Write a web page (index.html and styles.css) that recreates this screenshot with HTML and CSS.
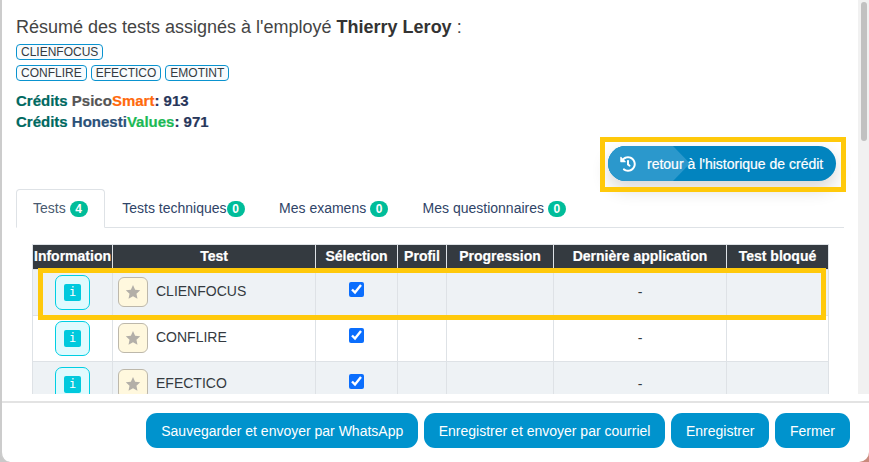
FILE: index.html
```html
<!DOCTYPE html>
<html lang="fr">
<head>
    <meta charset="UTF-8">
    <title>Résumé des tests</title>
    <link rel="stylesheet" href="styles.css">
</head>
<body>
    <div class="modal">
        <div class="modal-main">
            <div class="modal-body">
                <h5 class="summary">Résumé des tests assignés à l'employé <strong>Thierry Leroy</strong> :</h5>
                <div class="assigned">
                    <div class="assigned-row"><span class="test-tag">CLIENFOCUS</span></div>
                    <div class="assigned-row">
                        <span class="test-tag">CONFLIRE</span>
                        <span class="test-tag">EFECTICO</span>
                        <span class="test-tag">EMOTINT</span>
                    </div>
                </div>
                <p class="credits"><span class="teal">Crédits</span> <span class="grey">Psico</span><span class="orange">Smart</span>: 913</p>
                <p class="credits"><span class="teal">Crédits</span> <span class="blue">Honesti</span><span class="green">Values</span>: 971</p>

                <div class="back-row">
                    <button class="back-btn">
                        <svg class="back-icon" viewBox="0 0 512 512"><path d="M504 255.531c.253 136.64-111.18 248.372-247.82 248.468-59.015.042-113.223-20.53-155.822-54.911-11.077-8.94-11.905-25.541-1.839-35.607l11.267-11.267c8.609-8.609 22.353-9.551 31.891-1.984C173.062 425.135 212.781 440 256 440c101.705 0 184-82.311 184-184 0-101.705-82.311-184-184-184-48.814 0-93.149 18.969-126.068 49.932l50.754 50.754c10.08 10.08 2.941 27.314-11.313 27.314H24c-8.837 0-16-7.163-16-16V38.627c0-14.254 17.234-21.393 27.314-11.314l49.372 49.372C129.209 34.136 189.552 8 256 8c136.81 0 247.747 110.78 248 247.531zm-180.912 78.784l9.823-12.63c8.138-10.463 6.253-25.542-4.21-33.679L288 256.349V152c0-13.255-10.745-24-24-24h-16c-13.255 0-24 10.745-24 24v135.651l65.409 50.874c10.463 8.137 25.541 6.253 33.679-4.21z"/></svg>
                        <span class="back-label">retour à l'historique de crédit</span>
                    </button>
                    <div class="highlight highlight-btn"></div>
                </div>

                <ul class="tabs">
                    <li class="tab active">Tests <span class="count">4</span></li>
                    <li class="tab">Tests techniques<span class="count">0</span></li>
                    <li class="tab">Mes examens <span class="count">0</span></li>
                    <li class="tab">Mes questionnaires <span class="count">0</span></li>
                </ul>

                <div class="tab-pane">
                    <table class="tests-table">
                        <colgroup>
                            <col class="col-info"><col class="col-test"><col class="col-sel"><col class="col-profil"><col class="col-prog"><col class="col-date"><col class="col-lock">
                        </colgroup>
                        <thead>
                            <tr>
                                <th>Information</th>
                                <th>Test</th>
                                <th>Sélection</th>
                                <th>Profil</th>
                                <th>Progression</th>
                                <th>Dernière application</th>
                                <th>Test bloqué</th>
                            </tr>
                        </thead>
                        <tbody id="testRows"></tbody>
                    </table>
                    <div class="highlight highlight-row"></div>
                </div>
            </div>
            <div class="scrollbar"><div class="scrollbar-thumb"></div></div>
        </div>
        <div class="modal-footer">
            <button class="footer-btn">Sauvegarder et envoyer par WhatsApp</button>
            <button class="footer-btn">Enregistrer et envoyer par courriel</button>
            <button class="footer-btn">Enregistrer</button>
            <button class="footer-btn">Fermer</button>
        </div>
    </div>
    <script>
        const tests = ["CLIENFOCUS", "CONFLIRE", "EFECTICO"];
        const rows = document.getElementById("testRows");

        tests.forEach(name => {
            const row = document.createElement("tr");
            row.innerHTML = `
                <td class="center"><span class="info-btn"><span class="info-square">i</span></span></td>
                <td>
                    <div class="test-cell">
                        <span class="star-btn"><svg viewBox="0 0 24 24"><path d="M12 1.5l3.2 7 7.6.9-5.6 5.2 1.5 7.6L12 18.4l-6.7 3.8 1.5-7.6L1.2 9.4l7.6-.9z"/></svg></span>
                        <span class="test-name">${name}</span>
                    </div>
                </td>
                <td class="center top"><input type="checkbox" checked></td>
                <td></td>
                <td></td>
                <td class="center last-date">-</td>
                <td></td>
            `;
            rows.appendChild(row);
        });
    </script>
</body>
</html>
```

FILE: styles.css
```css
html {
    background: linear-gradient(to right, #c9c9c9 50%, #c98a7c 50%);
}
body {
    margin: 0;
    font-family: "Liberation Sans", Arial, sans-serif;
    color: #343a40;
}
.modal {
    width: 869px;
    height: 462px;
    box-sizing: border-box;
    display: flex;
    flex-direction: column;
    background-color: #fff;
    border-left: 2px solid #ccc;
    border-radius: 0 0 10px 10px;
    overflow: hidden;
}
.modal-main {
    display: flex;
    height: 394px;
    flex-shrink: 0;
}
.modal-body {
    flex: 1;
    min-width: 0;
    padding: 16px 14px 0 14px;
    overflow: hidden;
}
.scrollbar {
    width: 11px;
    flex-shrink: 0;
    background-color: #f1f1f1;
    padding: 2px 2px 0 3px;
    box-sizing: border-box;
}
.scrollbar-thumb {
    height: 139px;
    background-color: #c1c1c1;
    border-radius: 3px;
}
.summary {
    margin: 0;
    font-size: 18px;
    font-weight: normal;
    line-height: 22px;
    color: #444;
}
.summary strong {
    color: #333;
}
.assigned {
    margin-top: 6px;
}
.assigned-row {
    display: flex;
    gap: 4px;
    margin-bottom: 5px;
}
.test-tag {
    height: 16px;
    line-height: 15px;
    box-sizing: border-box;
    padding: 0 4px;
    font-size: 12px;
    border: 1px solid #0a93cf;
    border-radius: 4px;
    background-color: #f8fbfd;
}
.credits {
    margin: 0;
    height: 21px;
    line-height: 21px;
    font-size: 15px;
    font-weight: bold;
    color: #27365a;
    -webkit-text-stroke: 0.2px;
}
.credits:first-of-type {
    margin-top: 9px;
}
.teal { color: #00695f; }
.grey { color: #555; }
.orange { color: #ff6a0d; }
.blue { color: #2b5178; }
.green { color: #1cb955; }

.back-row {
    position: relative;
    display: flex;
    justify-content: flex-end;
    margin-top: 14px;
    padding-right: 8px;
}
.back-btn {
    position: relative;
    display: flex;
    align-items: center;
    width: 228px;
    height: 35px;
    padding: 0 0 0 12px;
    border: none;
    border-radius: 18px;
    overflow: hidden;
    background-color: #0284bf;
    box-shadow: 0 8px 18px rgba(0, 0, 0, 0.16);
    color: #fff;
    font-family: inherit;
    font-size: 14px;
    -webkit-text-stroke: 0.2px;
}
.back-btn::before {
    content: "";
    position: absolute;
    left: 0;
    top: 0;
    width: 82px;
    height: 35px;
    background-color: #2b98cc;
    clip-path: polygon(0 0, 65px 0, 82px 50%, 65px 100%, 0 100%);
}
.back-icon {
    position: relative;
    width: 16px;
    height: 16px;
    fill: #fff;
}
.back-label {
    position: relative;
    margin-left: 11px;
    white-space: nowrap;
}
.highlight {
    position: absolute;
    box-sizing: border-box;
    border: 5px solid #ffc90b;
    pointer-events: none;
}
.highlight-btn {
    left: 584px;
    top: -9px;
    width: 246px;
    height: 55px;
}

.tabs {
    display: flex;
    list-style: none;
    margin: 8px 0 0 0;
    padding: 0;
    border-bottom: 1px solid #dee2e6;
    height: 38px;
}
.tab {
    height: 39px;
    box-sizing: border-box;
    padding: 0 17.25px;
    line-height: 39px;
    font-size: 14px;
    color: #2f4468;
    white-space: nowrap;
}
.tab.active {
    padding: 0 16px 0 16px;
    width: 89px;
    line-height: 37px;
    border: 1px solid #dee2e6;
    border-bottom-color: #fff;
    border-radius: 4px 4px 0 0;
    color: #495a70;
}
.count {
    display: inline-block;
    min-width: 18px;
    height: 16px;
    line-height: 16px;
    box-sizing: border-box;
    padding: 0 5px;
    border-radius: 8px;
    background-color: #00bd9a;
    color: #fff;
    font-size: 12px;
    font-weight: bold;
    text-align: center;
    vertical-align: 0;
}

.tab-pane {
    position: relative;
    padding: 16px 16px 0;
}
.tests-table {
    width: 796px;
    table-layout: fixed;
    border-collapse: collapse;
    font-size: 14px;
}
.col-info { width: 80px; }
.col-test { width: 203px; }
.col-sel { width: 82px; }
.col-profil { width: 49px; }
.col-prog { width: 107px; }
.col-date { width: 173px; }
.col-lock { width: 102px; }
.tests-table th {
    height: 22px;
    padding: 0 0 2px;
    background-color: #343a40;
    color: #fff;
    font-size: 14px;
    font-weight: bold;
    -webkit-text-stroke: 0.2px;
    border: 1px solid #dee2e6;
    border-bottom: none;
}
.tests-table td {
    height: 45px;
    padding: 0;
    border: 1px solid #dee2e6;
    vertical-align: middle;
}
.tests-table tbody tr:nth-child(odd) {
    background-color: #eef2f5;
}
.center {
    text-align: center;
}
.tests-table td.top {
    height: 33px;
    vertical-align: top;
    padding-top: 12px;
    line-height: 0;
}
.tests-table td.last-date {
    height: 43px;
    padding-bottom: 2px;
}
.info-btn {
    display: inline-flex;
    align-items: center;
    justify-content: center;
    width: 35px;
    height: 35px;
    box-sizing: border-box;
    border: 1px solid #00cfe3;
    border-radius: 7px;
    background-color: #e0fafe;
    vertical-align: middle;
}
.info-square {
    width: 17px;
    height: 17px;
    border-radius: 2px;
    background-color: #00c9dd;
    color: #fff;
    font-family: "DejaVu Sans Mono", monospace;
    font-size: 12px;
    line-height: 17px;
    text-align: center;
}
.test-cell {
    display: flex;
    align-items: center;
    gap: 8px;
    padding-left: 5px;
    padding-bottom: 1px;
}
.test-name {
    margin-bottom: 2px;
}
.star-btn {
    display: flex;
    align-items: center;
    justify-content: center;
    width: 30px;
    height: 30px;
    box-sizing: border-box;
    border: 1px solid #bdb8ab;
    border-radius: 6px;
    background-color: #fff8de;
}
.star-btn svg {
    width: 16px;
    height: 16px;
    fill: #b3afa8;
}
input[type="checkbox"] {
    width: 15px;
    height: 15px;
    margin: 0;
    accent-color: #0b6efd;
}
.highlight-row {
    left: 22px;
    top: 40px;
    width: 788px;
    height: 52px;
}

.modal-footer {
    flex: 1;
    display: flex;
    justify-content: flex-end;
    gap: 5.5px;
    margin-top: 7px;
    padding: 10px 19px 0 0;
    border-top: 2px solid #e3e3e3;
}
.footer-btn {
    height: 35px;
    padding: 0 15px;
    border: none;
    border-radius: 11px;
    background-color: #0093cd;
    color: #fff;
    font-family: inherit;
    font-size: 14px;
}
```
